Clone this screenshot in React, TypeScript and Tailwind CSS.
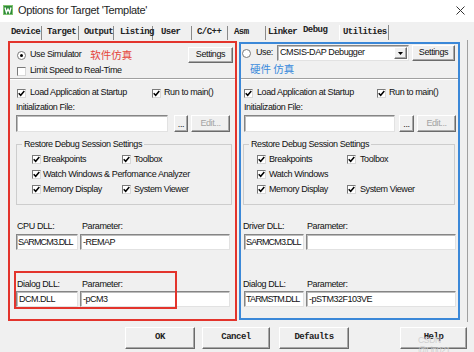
import React from "react";

const Check = ({ on = true }: { on?: boolean }) => (
  <span className="w-[9px] h-[9px] shrink-0 bg-white border border-t-[#7a7a7a] border-l-[#7a7a7a] border-r-[#d8d8d8] border-b-[#d8d8d8] flex items-center justify-center">
    {on && (
      <svg width="7" height="7" viewBox="0 0 7 7">
        <path d="M0.7 3.2 L2.7 5.3 L6.3 1.1" fill="none" stroke="#000" strokeWidth="1.5" />
      </svg>
    )}
  </span>
);

const Radio = ({ on = false }: { on?: boolean }) => (
  <span className="w-[9px] h-[9px] shrink-0 rounded-full bg-white border border-[#7a7a7a] flex items-center justify-center">
    {on && <span className="w-[3px] h-[3px] rounded-full bg-black" />}
  </span>
);

const sunken =
  "bg-white border border-t-[#858585] border-l-[#858585] border-r-[#e2e2e2] border-b-[#e2e2e2] shadow-[inset_1px_1px_0_#bcbcbc]";
const raised =
  "bg-[#f0f0f0] border border-t-white border-l-white border-r-[#6b6b6b] border-b-[#6b6b6b] shadow-[inset_-1px_-1px_0_#a8a8a8]";

const Field = ({ className, text, tight = false }: { className: string; text?: string; tight?: boolean }) => (
  <div
    className={`${className} h-full ${sunken} flex items-center leading-[12px] whitespace-nowrap overflow-hidden ${
      tight ? "pl-[1px] tracking-[-0.85px]" : "pl-[2px] tracking-[-0.5px]"
    }`}
  >
    {text}
  </div>
);

const tabs = [
  { t: "Device", c: "w-[35px] pl-[4px] border-r border-r-[#8a8a8a]" },
  { t: "Target", c: "w-[37px] pl-[5px] border-r border-r-[#8a8a8a]" },
  { t: "Output", c: "w-[35px] pl-[5px] border-r border-r-[#8a8a8a]" },
  { t: "Listing", c: "w-[39px] pl-[6px] border-r border-r-[#8a8a8a]" },
  { t: "User", c: "w-[39px] pl-[8px] border-r border-r-[#8a8a8a]" },
  { t: "C/C++", c: "w-[36px] pl-[5px] border-r border-r-[#8a8a8a]" },
  { t: "Asm", c: "w-[38px] pl-[6px] border-r border-r-[#8a8a8a]" },
  { t: "Linker", c: "w-[33px] pl-[2px]" },
];

export default function App() {
  return (
    <div className="w-[474px] h-[352px] bg-[#f0f0f0] flex flex-col overflow-hidden relative text-[#111] text-[9px] tracking-[-0.4px] font-['Liberation_Sans','Noto_Sans_CJK_SC',sans-serif]">
      {/* Title bar */}
      <div className="h-[22px] bg-white flex items-center shrink-0">
        <svg className="ml-[3px] mt-[-2px]" width="10" height="10" viewBox="0 0 10 10">
          <rect width="10" height="10" fill="#2f8a3a" />
          <rect x="0.5" y="0.5" width="9" height="9" fill="none" stroke="#7fc46f" strokeWidth="1" />
          <path d="M2 2.5 L3.4 7.5 L5 4 L6.6 7.5 L8 2.5" fill="none" stroke="#fff" strokeWidth="1.3" />
        </svg>
        <span className="ml-[5px] text-[11px] tracking-[-0.35px] leading-[14px] text-[#1e1e1e] mt-[-2px]">
          Options for Target 'Template'
        </span>
        <svg className="ml-auto mr-[9px] mt-[-1px]" width="9" height="9" viewBox="0 0 9 9">
          <path d="M0.5 0.5 L8.5 8.5 M8.5 0.5 L0.5 8.5" stroke="#333" strokeWidth="1" />
        </svg>
      </div>

      {/* Tabs */}
      <div className="h-[18px] flex items-end pl-[7px] shrink-0 font-['Liberation_Mono',monospace] font-bold text-[9px] tracking-[-0.55px] text-[#222]">
        {tabs.map((tb) => (
          <div key={tb.t} className={`h-[14px] flex items-center ${tb.c}`}>
            {tb.t}
          </div>
        ))}
        <div className="w-[40px] h-[16px] pl-[4px] pb-[2px] flex items-center">Debug</div>
        <div className="w-[50px] h-[15px] pl-[3px] flex items-center border-l border-l-white border-r border-r-[#8a8a8a]">Utilities</div>
      </div>

      {/* Body */}
      <div className="h-[282px] flex shrink-0">
        <div className="ml-[2px] w-[466px] h-full border-r border-r-[#a0a0a0] flex pl-[6px] pt-[1px]">
          {/* LEFT (red) panel */}
          <div className="relative w-[229px] h-[280px] border-2 border-[#e3342c] flex flex-col">
            <div className="mt-[4px] h-[16px] flex items-center pl-[7px] pr-[2px]">
              <Radio on />
              <span className="ml-[4px]">Use Simulator</span>
              <span className="ml-[9px] text-[10.5px] tracking-normal text-[#e5463c] font-['Noto_Sans_CJK_SC',sans-serif]">软件仿真</span>
              <div className={`ml-auto w-[45px] h-[16px] ${raised} flex items-center justify-center`}>Settings</div>
            </div>
            <div className="mt-[2px] h-[12px] flex items-center pl-[7px]">
              <Check on={false} />
              <span className="ml-[4px]">Limit Speed to Real-Time</span>
            </div>
            <div className="mt-[1px] border-t border-t-[#a0a0a0] border-b border-b-white" />
            <div className="mt-[7px] h-[12px] flex items-center pl-[7px]">
              <div className="w-[135px] flex items-center">
                <Check />
                <span className="ml-[4px]">Load Application at Startup</span>
              </div>
              <Check />
              <span className="ml-[3px]">Run to main()</span>
            </div>
            <div className="mt-[3px] h-[12px] flex items-center pl-[6px]">Initialization File:</div>
            <div className="mt-[1px] h-[17px] flex pl-[6px]">
              <Field className="w-[152px]" />
              <div className={`ml-[6px] w-[14px] h-full ${raised} flex items-end justify-center leading-[12px] pb-[1px]`}>...</div>
              <div className={`ml-[3px] w-[39px] h-full ${raised} flex items-center justify-center text-[#a3a3a3]`}>Edit...</div>
            </div>
            <fieldset className="mt-[6px] ml-[6px] w-[216px] border border-[#cdcdcd] pb-[7px]">
              <legend className="ml-[5px] px-[2px] leading-[12px]">Restore Debug Session Settings</legend>
              <div className="pt-[2px]">
                <div className="h-[15px] flex items-center pl-[15px]">
                  <div className="w-[90px] flex items-center">
                    <Check />
                    <span className="ml-[2px]">Breakpoints</span>
                  </div>
                  <Check />
                  <span className="ml-[3px]">Toolbox</span>
                </div>
                <div className="h-[15px] flex items-center pl-[15px]">
                  <Check />
                  <span className="ml-[2px]">Watch Windows &amp; Perfomance Analyzer</span>
                </div>
                <div className="h-[15px] flex items-center pl-[15px]">
                  <div className="w-[90px] flex items-center">
                    <Check />
                    <span className="ml-[2px]">Memory Display</span>
                  </div>
                  <Check />
                  <span className="ml-[3px]">System Viewer</span>
                </div>
              </div>
            </fieldset>
            <div className="mt-[16px] h-[12px] flex items-center pl-[7px]">
              <span className="w-[65px]">CPU DLL:</span>
              <span>Parameter:</span>
            </div>
            <div className="mt-[1px] h-[16px] flex pl-[6px]">
              <Field className="w-[62px]" text="SARMCM3.DLL" tight />
              <Field className="ml-[2px] w-[150px]" text="-REMAP" />
            </div>
            <div className="mt-[29px] h-[12px] flex items-center pl-[7px]">
              <span className="w-[65px]">Dialog DLL:</span>
              <span>Parameter:</span>
            </div>
            <div className="h-[16px] flex pl-[6px]">
              <Field className="w-[62px]" text="DCM.DLL" />
              <Field className="ml-[2px] w-[150px]" text="-pCM3" />
            </div>
            {/* annotation box */}
            <div className="absolute left-[4px] top-[228px] w-[163px] h-[38px] border-2 border-[#e3342c]" />
          </div>

          {/* RIGHT (blue) panel */}
          <div className="ml-[2px] mt-[1px] w-[221px] h-[278px] border-2 border-[#3b88d8] flex flex-col">
            <div className="mt-[1px] h-[16px] flex items-center pl-[1px]">
              <div className="w-[35px] flex items-center">
                <Radio />
                <span className="ml-[5px]">Use:</span>
              </div>
              <div className={`w-[132px] h-[16px] ${sunken} flex items-center pl-[2px]`}>
                <span>CMSIS-DAP Debugger</span>
                <div className={`ml-auto mr-[1px] w-[13px] h-[12px] ${raised} flex items-center justify-center`}>
                  <svg width="5" height="3" viewBox="0 0 5 3">
                    <path d="M0 0 H5 L2.5 3 Z" fill="#000" />
                  </svg>
                </div>
              </div>
              <div className={`ml-[3px] w-[43px] h-[16px] ${raised} flex items-center justify-center`}>Settings</div>
            </div>
            <div className="mt-[1px] h-[14px] flex items-center pl-[9px] text-[10.5px] tracking-normal text-[#3a8bdc] font-['Noto_Sans_CJK_SC',sans-serif]">
              硬件 仿真
            </div>
            <div className="mt-[2px] border-t border-t-[#a0a0a0] border-b border-b-white" />
            <div className="mt-[7px] h-[12px] flex items-center pl-[3px]">
              <div className="w-[133px] flex items-center">
                <Check />
                <span className="ml-[4px]">Load Application at Startup</span>
              </div>
              <Check />
              <span className="ml-[3px]">Run to main()</span>
            </div>
            <div className="mt-[3px] h-[12px] flex items-center pl-[3px]">Initialization File:</div>
            <div className="mt-[1px] h-[17px] flex pl-[3px]">
              <Field className="w-[151px]" />
              <div className={`ml-[4px] w-[15px] h-full ${raised} flex items-end justify-center leading-[12px] pb-[1px]`}>...</div>
              <div className={`ml-[3px] w-[39px] h-full ${raised} flex items-center justify-center text-[#a3a3a3]`}>Edit...</div>
            </div>
            <fieldset className="mt-[6px] ml-[2px] w-[212px] border border-[#cdcdcd] pb-[7px]">
              <legend className="ml-[5px] px-[2px] leading-[12px]">Restore Debug Session Settings</legend>
              <div className="pt-[2px]">
                <div className="h-[15px] flex items-center pl-[13px]">
                  <div className="w-[90px] flex items-center">
                    <Check />
                    <span className="ml-[3px]">Breakpoints</span>
                  </div>
                  <Check />
                  <span className="ml-[4px]">Toolbox</span>
                </div>
                <div className="h-[15px] flex items-center pl-[13px]">
                  <Check />
                  <span className="ml-[3px]">Watch Windows</span>
                </div>
                <div className="h-[15px] flex items-center pl-[13px]">
                  <div className="w-[90px] flex items-center">
                    <Check />
                    <span className="ml-[3px]">Memory Display</span>
                  </div>
                  <Check />
                  <span className="ml-[4px]">System Viewer</span>
                </div>
              </div>
            </fieldset>
            <div className="mt-[16px] h-[12px] flex items-center pl-[2px]">
              <span className="w-[64px]">Driver DLL:</span>
              <span>Parameter:</span>
            </div>
            <div className="mt-[1px] h-[16px] flex pl-[3px]">
              <Field className="w-[60px]" text="SARMCM3.DLL" tight />
              <Field className="ml-[2px] w-[150px]" text="" />
            </div>
            <div className="mt-[29px] h-[12px] flex items-center pl-[2px]">
              <span className="w-[64px]">Dialog DLL:</span>
              <span>Parameter:</span>
            </div>
            <div className="h-[16px] flex pl-[3px]">
              <Field className="w-[60px]" text="TARMSTM.DLL" tight />
              <Field className="ml-[2px] w-[150px]" text="-pSTM32F103VE" />
            </div>
          </div>
        </div>
      </div>

      {/* Bottom buttons */}
      <div className="flex pt-[5px] font-['Liberation_Mono',monospace] font-bold text-[9px] tracking-[-0.5px] text-[#222]">
        <div className={`ml-[125px] w-[70px] h-[22px] ${raised} border-l-[#a0a0a0] border-t-[#a0a0a0] flex items-center justify-center`}>OK</div>
        <div className={`ml-[7px] w-[68px] h-[22px] ${raised} border-l-[#a0a0a0] border-t-[#a0a0a0] flex items-center justify-center`}>Cancel</div>
        <div className={`ml-[9px] w-[70px] h-[22px] ${raised} border-l-[#a0a0a0] border-t-[#a0a0a0] flex items-center justify-center`}>Defaults</div>
        <div className={`ml-[51px] w-[67px] h-[22px] ${raised} border-l-[#a0a0a0] border-t-[#a0a0a0] flex items-center justify-center`}>Help</div>
      </div>

      {/* watermark */}
      <div className="absolute left-[418px] top-[335px] text-[8.5px] leading-[10px] tracking-[-0.3px] text-[#cfcfcf]">
        CSDN @Lin021
      </div>
    </div>
  );
}
